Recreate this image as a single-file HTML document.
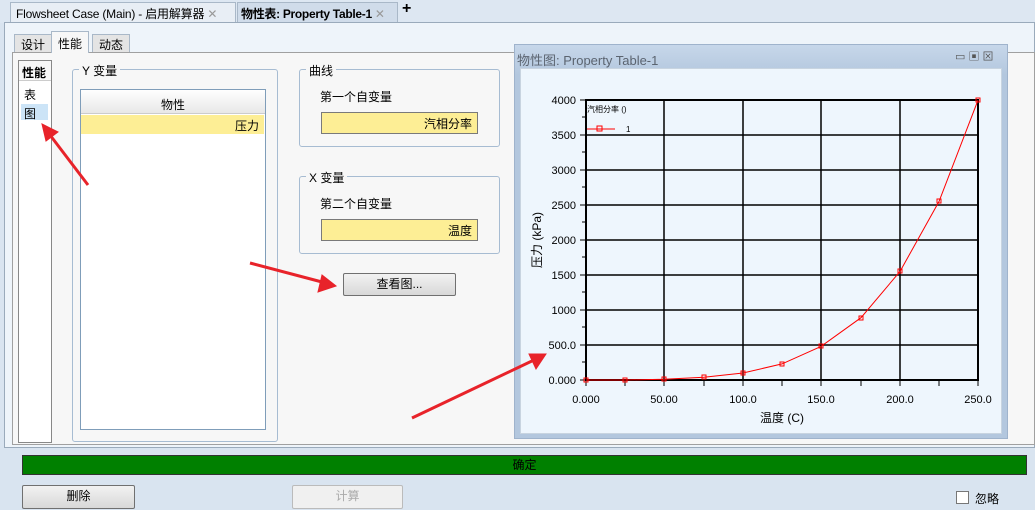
<!DOCTYPE html>
<html><head><meta charset="utf-8"><style>
*{box-sizing:border-box;margin:0;padding:0}
body{width:1035px;height:510px;overflow:hidden;background:#d9e4f0;font-family:"Liberation Sans","Noto Sans CJK SC",sans-serif;font-size:12px;color:#000;position:relative}
.a{position:absolute;white-space:nowrap}
.tab{position:absolute;top:2px;height:20px;border:1px solid #a9b8c8;border-bottom:none;background:#e8eef5;padding:2px 5px;font-size:12px;white-space:nowrap;overflow:hidden}
.grp{position:absolute;border:1px solid #a7bcd2;border-radius:3px;background:#f7f7f7}
.grp .t{position:absolute;top:-8px;left:6px;background:#f7f7f7;padding:0 3px;font-size:12px}
.yel{position:absolute;background:#fdee95;border:1px solid #7a7a7a;text-align:right;padding:2px 5px;font-size:12px}
.btn{position:absolute;border:1px solid #707070;border-radius:2px;background:linear-gradient(#f2f2f2,#d8d8d8);text-align:center;font-size:12px;line-height:20px}
</style></head><body>
<div class="a" style="left:0;top:0;width:1035px;height:23px;background:#dde7f2"></div>
<div class="tab" style="left:10px;width:226px;letter-spacing:-0.2px">Flowsheet Case (Main) - 启用解算器 <span style="color:#999">✕</span></div>
<div class="tab" style="left:237px;width:161px;background:#d0dcea;font-weight:bold;padding:2px 3px;letter-spacing:-0.3px">物性表: Property Table-1 <span style="color:#999;font-weight:normal">✕</span></div>
<div class="a" style="left:402px;top:0px;font-size:16px;font-weight:bold">+</div>
<div class="a" style="left:4px;top:22px;width:1031px;height:426px;border:1px solid #9aaabb;background:#eef4fa"></div>
<div class="a" style="left:12px;top:52px;width:1023px;height:393px;border:1px solid #a0a0a0;background:#f7f7f7"></div>
<div class="tab" style="left:14px;top:34px;height:18px;font-size:12px;padding:1px 6px;background:#e4e4e4">设计</div>
<div class="tab" style="left:51px;top:31px;height:22px;font-size:12px;padding:3px 6px;background:#f7f7f7">性能</div>
<div class="tab" style="left:92px;top:34px;height:18px;font-size:12px;padding:1px 6px;background:#e4e4e4">动态</div>
<div class="a" style="left:18px;top:60px;width:34px;height:383px;border:1px solid #888;background:#fff"></div>
<div class="a" style="left:19px;top:61px;width:32px;height:20px;background:#f7f7f7;border-bottom:1px solid #ccc;font-weight:bold;padding:3px 3px">性能</div>
<div class="a" style="left:24px;top:86px;font-size:12px">表</div>
<div class="a" style="left:21px;top:104px;width:27px;height:16px;background:#cce4f7;padding:1px 3px">图</div>
<div class="grp" style="left:72px;top:69px;width:206px;height:373px"><span class="t">Y 变量</span></div>
<div class="a" style="left:80px;top:89px;width:186px;height:341px;border:1px solid #7f9db9;background:#fff"></div>
<div class="a" style="left:81px;top:90px;width:184px;height:24px;background:linear-gradient(#fff,#e8e8e8);border-bottom:1px solid #ccc;text-align:center;padding-top:6px">物性</div>
<div class="a" style="left:81px;top:115px;width:183px;height:19px;background:#fdee95;text-align:right;padding:2px 5px">压力</div>
<div class="grp" style="left:299px;top:69px;width:201px;height:78px"><span class="t">曲线</span></div>
<div class="a" style="left:320px;top:88px">第一个自变量</div>
<div class="yel" style="left:321px;top:112px;width:157px;height:22px">汽相分率</div>
<div class="grp" style="left:299px;top:176px;width:201px;height:78px"><span class="t">X 变量</span></div>
<div class="a" style="left:320px;top:195px">第二个自变量</div>
<div class="yel" style="left:321px;top:219px;width:157px;height:22px">温度</div>
<div class="btn" style="left:343px;top:273px;width:113px;height:23px">查看图...</div>
<div class="a" style="left:514px;top:44px;width:494px;height:395px;border:1px solid #9fb3cc;background:linear-gradient(#c7d7ea,#b3c7de 30px)"></div>
<div class="a" style="left:517px;top:50px;font-size:13px;color:#5b6470">物性图: Property Table-1</div>
<div class="a" style="left:955px;top:48px;font-size:11px;color:#555">▭ ▣ ⊠</div>
<div class="a" style="left:520px;top:68px;width:482px;height:366px;border:1px solid #c8d4e0;background:#eef6fd"></div>
<svg class="a" style="left:0;top:0" width="1035" height="510" font-family="Liberation Sans,Noto Sans CJK SC,sans-serif">
<g stroke="#000" stroke-width="1.5">
<line x1="586" y1="100" x2="978" y2="100"/><line x1="586" y1="135" x2="978" y2="135"/><line x1="586" y1="170" x2="978" y2="170"/><line x1="586" y1="205" x2="978" y2="205"/><line x1="586" y1="240" x2="978" y2="240"/><line x1="586" y1="275" x2="978" y2="275"/><line x1="586" y1="310" x2="978" y2="310"/><line x1="586" y1="345" x2="978" y2="345"/>
<line x1="664" y1="100" x2="664" y2="380"/><line x1="743" y1="100" x2="743" y2="380"/><line x1="821" y1="100" x2="821" y2="380"/><line x1="900" y1="100" x2="900" y2="380"/>
</g>
<rect x="586" y="100" width="392" height="280" fill="none" stroke="#000" stroke-width="2"/>
<g stroke="#000" stroke-width="1">
<path d="M580 100h6M580 135h6M580 170h6M580 205h6M580 240h6M580 275h6M580 310h6M580 345h6M580 380h6M582 117h4M582 152h4M582 187h4M582 222h4M582 257h4M582 292h4M582 327h4M582 362h4"/>
<path d="M586 380v6M625 380v6M664 380v6M704 380v6M743 380v6M782 380v6M821 380v6M861 380v6M900 380v6M939 380v6M978 380v6"/>
</g>
<g font-size="11" text-anchor="end"><text x="576" y="104">4000</text><text x="576" y="139">3500</text><text x="576" y="174">3000</text><text x="576" y="209">2500</text><text x="576" y="244">2000</text><text x="576" y="279">1500</text><text x="576" y="314">1000</text><text x="576" y="349">500.0</text><text x="576" y="384">0.000</text></g>
<g font-size="11" text-anchor="middle"><text x="586" y="403">0.000</text><text x="664" y="403">50.00</text><text x="743" y="403">100.0</text><text x="821" y="403">150.0</text><text x="900" y="403">200.0</text><text x="978" y="403">250.0</text></g>
<text x="782" y="422" font-size="12" text-anchor="middle">温度 (C)</text>
<text transform="translate(541,240) rotate(-90)" font-size="12" text-anchor="middle">压力 (kPa)</text>
<text x="587" y="112" font-size="8">汽相分率 ()</text>
<line x1="587" y1="129" x2="615" y2="129" stroke="red"/><rect x="597" y="126" width="5" height="5" fill="none" stroke="red"/><text x="626" y="132" font-size="8">1</text>
<polyline fill="none" stroke="red" points="586,380 625,380 664,379.3 704,377.2 743,373 782,363.9 821,346.4 861,317.7 900,271.5 939,201.5 978,100.2"/>
<g fill="none" stroke="red"><rect x="584" y="378" width="4" height="4"/><rect x="623" y="378" width="4" height="4"/><rect x="662" y="377" width="4" height="4"/><rect x="702" y="375" width="4" height="4"/><rect x="741" y="371" width="4" height="4"/><rect x="780" y="362" width="4" height="4"/><rect x="819" y="344" width="4" height="4"/><rect x="859" y="316" width="4" height="4"/><rect x="898" y="269" width="4" height="4"/><rect x="937" y="199" width="4" height="4"/><rect x="976" y="98" width="4" height="4"/></g>
<g fill="#e8232a" stroke="#e8232a" stroke-width="3">
<line x1="88" y1="185" x2="50" y2="135"/><polygon points="42,124 58,132 46,141" stroke-width="1"/>
<line x1="250" y1="263" x2="322" y2="282"/><polygon points="336,286 318,292 322,275" stroke-width="1"/>
<line x1="412" y1="418" x2="534" y2="360"/><polygon points="546,354 536,369 529,354" stroke-width="1"/>
</g>
</svg>
<div class="a" style="left:22px;top:455px;width:1005px;height:20px;background:#008000;border:1px solid #333;text-align:center;line-height:18px;font-size:12px">确定</div>
<div class="btn" style="left:22px;top:485px;width:113px;height:24px">删除</div>
<div class="btn" style="left:292px;top:485px;width:111px;height:24px;color:#aaa;border-color:#bbb;background:#f0f0f0">计算</div>
<div class="a" style="left:956px;top:491px;width:13px;height:13px;border:1px solid #777;background:#fff"></div>
<div class="a" style="left:975px;top:490px">忽略</div>
</body></html>
